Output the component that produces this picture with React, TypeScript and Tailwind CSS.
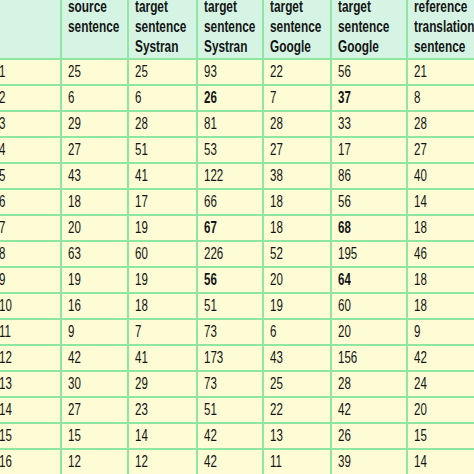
import React from "react"

type Cell = number | { v: number; b: true }

const B = (v: number): Cell => ({ v, b: true })

const headers = [
  [],
  ["source", "sentence"],
  ["target", "sentence", "Systran"],
  ["target", "sentence", "Systran"],
  ["target", "sentence", "Google"],
  ["target", "sentence", "Google"],
  ["reference", "translation", "sentence"],
]

const rows: Cell[][] = [
  [1, 25, 25, 93, 22, 56, 21],
  [2, 6, 6, B(26), 7, B(37), 8],
  [3, 29, 28, 81, 28, 33, 28],
  [4, 27, 51, 53, 27, 17, 27],
  [5, 43, 41, 122, 38, 86, 40],
  [6, 18, 17, 66, 18, 56, 14],
  [7, 20, 19, B(67), 18, B(68), 18],
  [8, 63, 60, 226, 52, 195, 46],
  [9, 19, 19, B(56), 20, B(64), 18],
  [10, 16, 18, 51, 19, 60, 18],
  [11, 9, 7, 73, 6, 20, 9],
  [12, 42, 41, 173, 43, 156, 42],
  [13, 30, 29, 73, 25, 28, 24],
  [14, 27, 23, 51, 22, 42, 20],
  [15, 15, 14, 42, 13, 26, 15],
  [16, 12, 12, 42, 11, 39, 14],
]

export default function App() {
  return (
    <div
      className="w-[474px] h-[474px] overflow-hidden bg-[#8fe6a0] text-[#141414]"
      style={{ fontFamily: '"Liberation Sans", Arial, sans-serif' }}
    >
      <div className="grid grid-cols-[60px_65px_67px_64px_66px_74px_66px] gap-[2px]">
        {headers.map((h, i) => (
          <div
            key={"h" + i}
            className={`h-[58px] bg-[#d6f4e4] overflow-hidden whitespace-nowrap ${i === 0 ? "pl-0" : "pl-[6px]"}`}
          >
            <div className="-mt-[3px] origin-left scale-x-[0.74] text-[16px] leading-[20px] font-bold">
              {h.map((line, j) => (
                <div key={j}>{line}</div>
              ))}
            </div>
          </div>
        ))}
        {rows.map((r, ri) =>
          r.map((c, ci) => {
            const bold = typeof c !== "number"
            const v = typeof c === "number" ? c : c.v
            return (
              <div
                key={ri + "-" + ci}
                className={`h-[24px] bg-[#fefcd4] overflow-hidden whitespace-nowrap pt-[1px] text-[16px] leading-[22px] ${
                  ci === 0 ? "-ml-[1px]" : "pl-[6px]"
                }`}
              >
                <span className={`inline-block origin-left scale-x-[0.72] ${bold ? "font-bold" : ""}`}>{v}</span>
              </div>
            )
          })
        )}
      </div>
    </div>
  )
}
